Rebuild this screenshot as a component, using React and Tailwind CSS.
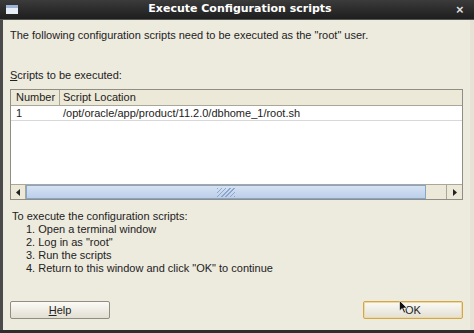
import React from "react";

const font = { fontFamily: '"Liberation Sans", Arial, sans-serif' };

const App = () => {
  return (
    <div className="w-[474px] h-[333px] overflow-hidden relative bg-[#4a4a4a] flex flex-col" style={font}>
      {/* ---------- title bar ---------- */}
      <div className="h-[20px] flex items-center px-[6px] bg-gradient-to-b from-[#3b3b3b] to-[#1e1e1e] border-b border-[#555]">
        <div className="w-[12px] h-[9px] bg-[#e8eef6] border-t-[3px] border-[#9cb4d8]" />
        <div className="flex-1 text-center text-white font-bold text-[11px] pl-[6px]" style={{ fontFamily: '"DejaVu Sans", sans-serif' }}>
          Execute Configuration scripts
        </div>
        <div className="w-[12px] text-[#ddd] text-[13px] font-bold leading-none">×</div>
      </div>

      {/* ---------- body ---------- */}
      <div className="flex-1 ml-[3px] bg-[#edeade] flex flex-col text-[11px] text-[#222] pl-[7px] pr-[11px] shadow-[inset_-4px_0_0_0_#e6e3d6]">
        <p className="mt-[8px] leading-[14px]">
          The following configuration scripts need to be executed as the "root" user.
        </p>
        <p className="mt-[26px] leading-[14px]">
          <span className="underline">S</span>cripts to be executed:
        </p>

        {/* table */}
        <div className="mt-[7px] h-[111px] border border-[#8f8d84] bg-white flex flex-col">
          <div className="flex h-[16px] bg-[#ece9d8] border-b border-[#a9a69a] leading-[15px]">
            <div className="w-[49px] border-r border-[#a9a69a] pl-[5px]">Number</div>
            <div className="pl-[3px]">Script Location</div>
          </div>
          <div className="flex h-[15px] border-b border-[#d8d8d8] leading-[14px]">
            <div className="w-[49px] pl-[5px]">1</div>
            <div className="pl-[3px]">/opt/oracle/app/product/11.2.0/dbhome_1/root.sh</div>
          </div>
          <div className="flex-1" />
          {/* horizontal scrollbar */}
          <div className="h-[15px] flex border-t border-[#a9a69a] bg-[#ece9d8]">
            <div className="w-[15px] flex items-center justify-center border-r border-[#a9a69a]">
              <svg width="5" height="7" viewBox="0 0 5 7"><path d="M4 0 L0 3.5 L4 7 Z" fill="#222" /></svg>
            </div>
            <div className="w-[400px] bg-gradient-to-b from-[#d6e2f3] to-[#bccfea] border border-[#8aa3c8] flex items-center justify-center">
              <div className="w-[18px] h-[9px] bg-[repeating-linear-gradient(135deg,#8ea6cc_0px,#8ea6cc_1px,transparent_1px,transparent_3px)]" />
            </div>
            <div className="flex-1 border-r border-[#a9a69a]" />
            <div className="w-[15px] flex items-center justify-center">
              <svg width="5" height="7" viewBox="0 0 5 7"><path d="M1 0 L5 3.5 L1 7 Z" fill="#222" /></svg>
            </div>
          </div>
        </div>

        <div className="mt-[10px] leading-[13px] pl-[2px]">
          <p>To execute the configuration scripts:</p>
          <ol className="pl-[14px]">
            <li>1. Open a terminal window</li>
            <li>2. Log in as "root"</li>
            <li>3. Run the scripts</li>
            <li>4. Return to this window and click "OK" to continue</li>
          </ol>
        </div>

        <div className="flex-1" />

        {/* buttons */}
        <div className="flex justify-between mb-[11px]">
          <button className="w-[100px] h-[18px] rounded-[2px] border border-[#8f8d84] bg-gradient-to-b from-[#fbfaf6] to-[#e2dfd2] text-[11px] leading-none">
            <span className="underline">H</span>elp
          </button>
          <button className="w-[100px] h-[18px] rounded-[2px] border border-[#d2a74a] bg-gradient-to-b from-[#fbfaf6] to-[#e2dfd2] text-[11px] leading-none shadow-[inset_0_0_0_1px_#f0d9a0]">
            OK
          </button>
        </div>
      </div>
      <div className="h-[3px] bg-[#2d2d2d]" />

      {/* mouse pointer */}
      <svg className="absolute left-[399px] top-[300px]" width="9" height="14" viewBox="0 0 9 14">
        <path d="M0.5 0.5 L0.5 11 L3 8.5 L5 13 L6.5 12.3 L4.6 8 L8 8 Z" fill="#111" stroke="#fff" strokeWidth="0.6" />
      </svg>
    </div>
  );
};

export default App;
